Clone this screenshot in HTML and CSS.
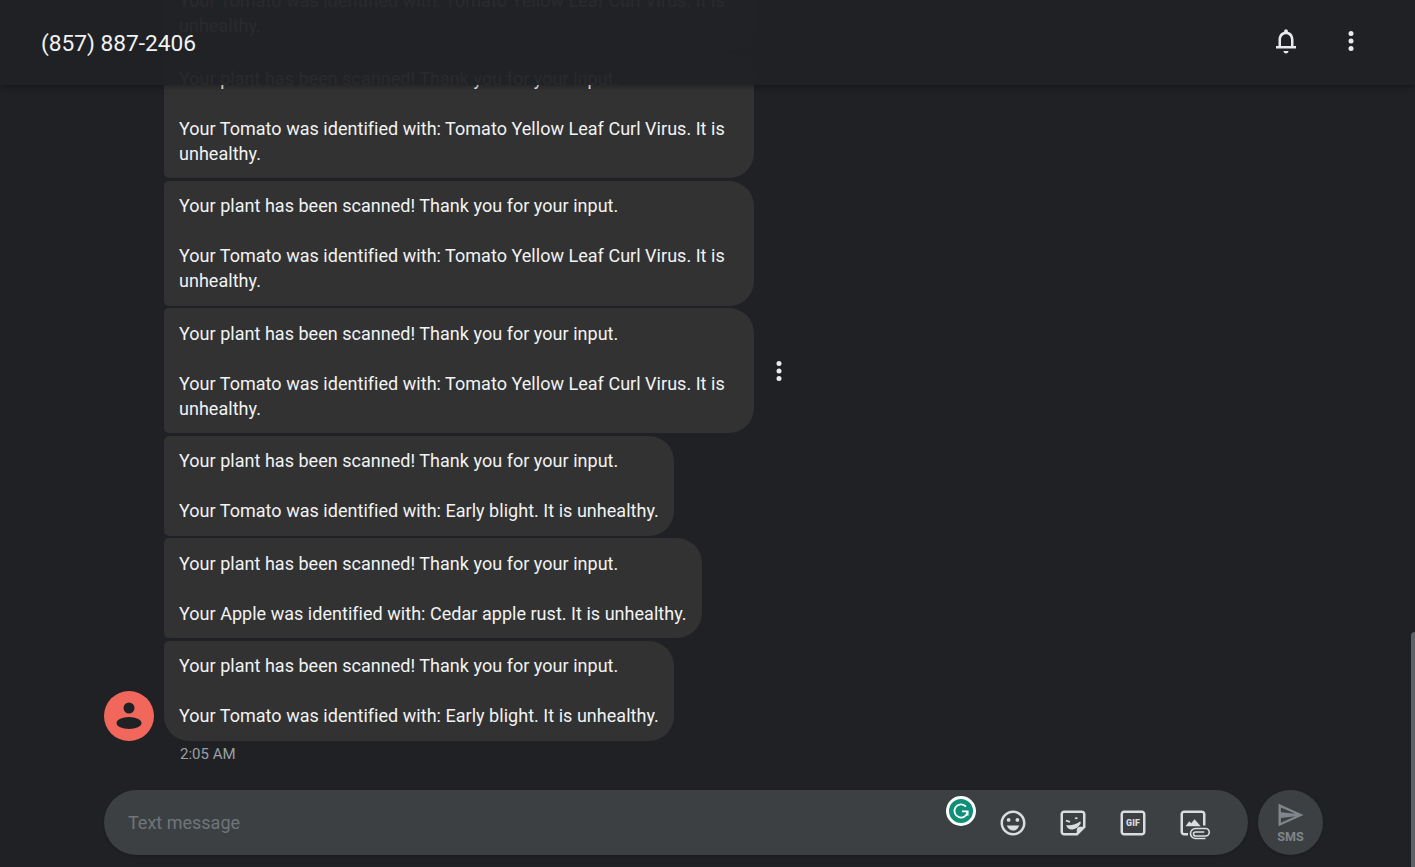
FILE: index.html
```html
<!DOCTYPE html>
<html lang="en">
<head>
    <meta charset="UTF-8">
    <meta name="viewport" content="width=device-width, initial-scale=1.0">
    <title>Messages</title>
    <link rel="stylesheet" href="styles.css">
</head>
<body>
    <div class="app">
        <header class="topbar">
            <h1 class="contact">(857) 887-2406</h1>
            <div class="topbar-actions">
                <svg class="icon" viewBox="0 0 24 24"><path d="M12 22c1.1 0 2-.9 2-2h-4c0 1.1.9 2 2 2zm6-6v-5c0-3.07-1.63-5.64-4.5-6.32V4c0-.83-.67-1.5-1.5-1.5s-1.5.67-1.5 1.5v.68C7.64 5.36 6 7.92 6 11v5H4v2h16v-2h-2zm-2 0H8v-5c0-2.48 1.51-4.5 4-4.5s4 2.02 4 4.5v5z"/></svg>
                <svg class="icon" viewBox="0 0 24 24"><circle cx="12" cy="6" r="2"/><circle cx="12" cy="12" r="2"/><circle cx="12" cy="18" r="2"/></svg>
            </div>
        </header>

        <main class="thread">
            <div class="row">
                <div class="bubble">Your plant has been scanned! Thank you for your input.<br><br>Your Tomato was identified with: Tomato Yellow Leaf Curl Virus. It is unhealthy.</div>
            </div>
            <div class="row">
                <div class="bubble">Your plant has been scanned! Thank you for your input.<br><br>Your Tomato was identified with: Tomato Yellow Leaf Curl Virus. It is unhealthy.</div>
            </div>
            <div class="row">
                <div class="bubble">Your plant has been scanned! Thank you for your input.<br><br>Your Tomato was identified with: Tomato Yellow Leaf Curl Virus. It is unhealthy.</div>
            </div>
            <div class="row row-hover">
                <div class="bubble">Your plant has been scanned! Thank you for your input.<br><br>Your Tomato was identified with: Tomato Yellow Leaf Curl Virus. It is unhealthy.</div>
                <svg class="icon more" viewBox="0 0 24 24"><circle cx="12" cy="6" r="2"/><circle cx="12" cy="12" r="2"/><circle cx="12" cy="18" r="2"/></svg>
            </div>
            <div class="row">
                <div class="bubble">Your plant has been scanned! Thank you for your input.<br><br>Your Tomato was identified with: Early blight. It is unhealthy.</div>
            </div>
            <div class="row">
                <div class="bubble">Your plant has been scanned! Thank you for your input.<br><br>Your Apple was identified with: Cedar apple rust. It is unhealthy.</div>
            </div>
            <div class="row row-last">
                <div class="avatar">
                    <svg viewBox="0 0 50 50"><circle cx="25" cy="17" r="5.5"/><ellipse cx="25" cy="32" rx="12.5" ry="6"/></svg>
                </div>
                <div class="bubble bubble-last">Your plant has been scanned! Thank you for your input.<br><br>Your Tomato was identified with: Early blight. It is unhealthy.</div>
            </div>
            <div class="timestamp">2:05 AM</div>
        </main>

        <footer class="composer">
            <div class="compose-box">
                <span class="placeholder">Text message</span>
                <div class="grammarly">
                    <svg viewBox="0 0 24 24"><path d="M17 7.6A6.6 6.6 0 1 0 18.6 12.4h-5.6"/><path d="M18.6 12.4v4.2"/></svg>
                </div>
                <div class="compose-actions">
                    <svg class="icon" viewBox="0 0 24 24"><path d="M11.99 2C6.47 2 2 6.48 2 12s4.47 10 9.99 10C17.52 22 22 17.52 22 12S17.52 2 11.99 2zM12 20c-4.42 0-8-3.58-8-8s3.58-8 8-8 8 3.58 8 8-3.58 8-8 8z"/><circle cx="15.5" cy="9.5" r="1.5"/><circle cx="8.5" cy="9.5" r="1.5"/><path d="M12 18c2.28 0 4.22-1.66 5-4H7c.78 2.34 2.72 4 5 4z"/></svg>
                    <svg class="icon" viewBox="0 0 24 24"><path d="M5 2h14c1.66 0 3 1.34 3 3v10.5L15.5 22H5c-1.66 0-3-1.34-3-3V5c0-1.66 1.34-3 3-3zm0 2c-.55 0-1 .45-1 1v14c0 .55.45 1 1 1h9.700L20 14.700V5c0-.55-.45-1-1-1H5z"/><path d="M15 21v-3.500c0-1.400 1-2.500 2.500-2.500H21z"/><path d="M6.600 9.300l3.200 1-.4 1.400-3.200-1zM13.200 8.200c.5-1 2-1.200 2.800-.3l-.9 1c-.3-.3-.8-.2-1 .1z"/><path d="M6.500 13.600c4 .6 8.200-.6 11.200-2.800l.6 1c-1.400 3.600-4.800 5.600-8 5.400-1.800-.1-3.200-1.600-3.800-3.600z"/></svg>
                    <svg class="icon" viewBox="0 0 24 24"><path d="M5 2h14c1.66 0 3 1.34 3 3v14c0 1.66-1.34 3-3 3H5c-1.66 0-3-1.34-3-3V5c0-1.66 1.34-3 3-3zm0 2c-.55 0-1 .45-1 1v14c0 .55.45 1 1 1h14c.55 0 1-.45 1-1V5c0-.55-.45-1-1-1H5z"/><text class="gif-label" x="12" y="14.600" text-anchor="middle">GIF</text></svg>
                    <svg class="icon icon-attach" viewBox="0 0 24 24"><path d="M5 2h14c1.66 0 3 1.34 3 3v9h-2V5c0-.55-.45-1-1-1H5c-.55 0-1 .45-1 1v14c0 .55.45 1 1 1h3v2H5c-1.66 0-3-1.34-3-3V5c0-1.66 1.34-3 3-3z"/><path d="M6 14.500l3-3.900 1.600 1.600 2.600-3.200 5 5.500z"/><path class="clip" d="M21 19.200H14a1.600 1.600 0 0 0 0 3.200h8a3 3 0 0 0 0-6H14a4 4 0 0 0 0 8h8"/></svg>
                </div>
            </div>
            <div class="send">
                <svg viewBox="0 0 24 24"><path fill-rule="evenodd" d="M2 3L22 12 2 21zM3.900 5.900L15.500 11 3.900 9.700zM3.900 18.100L15.500 13 3.900 14.300z"/></svg>
                <span>SMS</span>
            </div>
        </footer>

        <div class="scrollbar"></div>
    </div>
</body>
</html>
```

FILE: styles.css
```css
* {
    box-sizing: border-box;
}

html, body {
    height: 100%;
    margin: 0;
}

body {
    background: #202124;
    color: #e8eaed;
    font-family: Roboto, "Liberation Sans", sans-serif;
    overflow: hidden;
}

.app {
    position: relative;
    display: flex;
    flex-direction: column;
    height: 100%;
}

.icon {
    display: block;
    width: 30px;
    height: 30px;
    fill: #e8eaed;
}

/* sits over the thread, so the messages show through a little */
.topbar {
    position: absolute;
    top: 0;
    left: 0;
    right: 0;
    z-index: 2;
    display: flex;
    align-items: center;
    justify-content: space-between;
    height: 85px;
    padding: 0 49px 4px 41px;
    background: rgba(32, 33, 36, 0.96);
    box-shadow: 0 2px 6px rgba(0, 0, 0, 0.3);
}

.contact {
    margin: 5px 0 0;
    font-size: 22.7px;
    font-weight: 400;
    color: #f1f3f4;
}

.topbar-actions {
    display: flex;
    gap: 35px;
}

.thread {
    flex: 1;
    min-height: 0;
    display: flex;
    flex-direction: column;
    justify-content: flex-end;
    overflow: hidden;
    padding: 0 0 27.25px 164px;
}

.row {
    position: relative;
    display: flex;
    align-items: center;
    margin-bottom: 2.5px;
    flex-shrink: 0;
}

.row-last {
    margin-bottom: 0;
}

.bubble {
    max-width: 590px;
    padding: 12.5px 15px;
    border-radius: 5px 25px 25px 5px;
    background: #323232;
    color: #f1f3f4;
    font-size: 18px;
    letter-spacing: 0.03px;
    line-height: 25px;
}

.bubble-last {
    border-bottom-left-radius: 25px;
}

.more {
    position: absolute;
    left: 600px;
    top: 48px;
}

.avatar {
    position: absolute;
    left: -60px;
    bottom: -0.5px;
    width: 50px;
    height: 50px;
    border-radius: 50%;
    background: #f2675c;
}

.avatar svg {
    display: block;
    fill: #202124;
}

.timestamp {
    margin: 5px 0 0 16px;
    height: 17px;
    font-size: 15px;
    line-height: 17px;
    color: #9aa0a6;
    flex-shrink: 0;
}

.composer {
    display: flex;
    gap: 10px;
    padding: 0 92px 12px 104px;
}

.compose-box {
    position: relative;
    flex: 1;
    display: flex;
    align-items: center;
    justify-content: space-between;
    height: 65px;
    padding: 0 40px 0 24px;
    border-radius: 32.5px;
    background: #3c4043;
    box-shadow: 0 1px 3px rgba(0, 0, 0, 0.2);
}

.placeholder {
    font-size: 18px;
    color: #70757a;
}

.compose-actions {
    display: flex;
    gap: 30px;
}

.compose-actions .icon {
    fill: #dadce0;
}

.compose-actions .icon-attach {
    overflow: visible;
}

.gif-label {
    font-family: Roboto, sans-serif;
    font-size: 7px;
    font-weight: 900;
    letter-spacing: 0.2px;
    fill: #dadce0;
}

.compose-actions .clip {
    fill: #3c4043;
    stroke: #dadce0;
    stroke-width: 1.3;
}

.grammarly {
    position: absolute;
    left: 842px;
    top: 6px;
    width: 30px;
    height: 30px;
    border: 3px solid #fff;
    border-radius: 50%;
    background: #0f8f78;
}

.grammarly svg {
    display: block;
    fill: none;
    stroke: #fff;
    stroke-width: 1.8;
}

.send {
    display: flex;
    flex-direction: column;
    align-items: center;
    width: 65px;
    height: 65px;
    padding-top: 10px;
    border-radius: 50%;
    background: #3c4043;
    color: #80868b;
    box-shadow: 0 1px 3px rgba(0, 0, 0, 0.2);
}

.send svg {
    display: block;
    flex-shrink: 0;
    width: 30px;
    height: 30px;
    fill: #80868b;
}

.send span {
    font-size: 12.5px;
    font-weight: 700;
    line-height: 13px;
}

.scrollbar {
    position: absolute;
    right: 0;
    bottom: 0;
    width: 4px;
    height: 235px;
    border-radius: 4px 0 0 0;
    background: #5f6368;
}
```
